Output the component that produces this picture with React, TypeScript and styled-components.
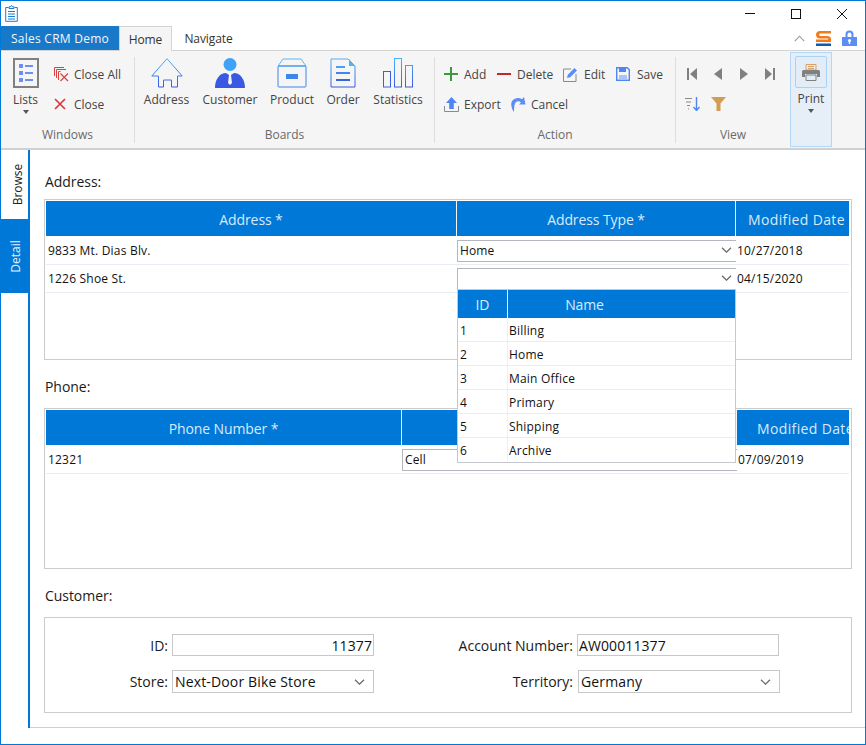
import * as React from 'react'
import styled, { createGlobalStyle } from 'styled-components'

const GlobalStyle = createGlobalStyle`
  html, body {
    margin: 0;
    padding: 0;
    background: #fff;
  }
  body {
    font-family: "Open Sans", "Noto Sans", sans-serif;
    font-size: 12px;
    color: #111;
  }
  * {
    box-sizing: border-box;
  }
`

// Window

const Window = styled.div`
  width: 866px;
  height: 745px;
  border: 1px solid #0078d7;
  background: #fff;
  overflow: hidden;
`

const TitleBar = styled.div`
  display: flex;
  align-items: flex-start;
  height: 25px;
  padding-left: 4px;
`

const AppIcon = styled.svg`
  margin-top: 4px;
`

const WindowButtons = styled.div`
  display: flex;
  margin-left: auto;
`

const WindowButton = styled.div`
  display: flex;
  justify-content: center;
  align-items: center;
  width: 46px;
  height: 26px;
`

// Tabs

const TabRow = styled.div`
  display: flex;
  align-items: stretch;
  height: 25px;
  border-bottom: 1px solid #d4d4d4;
`

const AppTab = styled.div`
  display: flex;
  align-items: center;
  justify-content: center;
  width: 118px;
  height: 24px;
  background: #1879c9;
  color: #f2f7fc;
  letter-spacing: 0.25px;
`

const Tab = styled.div<{ $active?: boolean }>`
  display: flex;
  align-items: center;
  justify-content: center;
  width: ${({ $active }) => ($active ? '53px' : '73px')};
  height: ${({ $active }) => ($active ? '25px' : '24px')};
  color: #333;
  letter-spacing: -0.1px;
  background: ${({ $active }) => ($active ? '#f5f5f5' : 'transparent')};
  border: ${({ $active }) => ($active ? '1px solid #d4d4d4' : 'none')};
  border-bottom: none;
`

const TabTools = styled.div`
  display: flex;
  align-items: center;
  gap: 11px;
  margin-left: auto;
  padding-right: 8px;
`

// Ribbon

const Ribbon = styled.div`
  display: flex;
  height: 99px;
  padding: 6px 0 5px;
  background: #f5f5f5;
  border-bottom: 2px solid #d0d0d0;
`

const Group = styled.div<{ $width: number; $last?: boolean }>`
  display: flex;
  flex-direction: column;
  width: ${({ $width }) => $width}px;
  border-right: ${({ $last }) => ($last ? 'none' : '1px solid #dedede')};
`

const GroupBody = styled.div<{ $pad: number; $gap?: number }>`
  display: flex;
  flex: 1;
  gap: ${({ $gap }) => $gap ?? 0}px;
  padding: 1px 0 0 ${({ $pad }) => $pad}px;
`

const GroupLabel = styled.div`
  height: 18px;
  line-height: 20px;
  text-align: center;
  color: #6a6a6a;
`

const LargeButton = styled.div<{ $width: number }>`
  display: flex;
  flex-direction: column;
  align-items: center;
  width: ${({ $width }) => $width}px;
  color: #444;
  white-space: nowrap;
`

const LargeIcon = styled.div`
  display: flex;
  justify-content: center;
  align-items: center;
  height: 30px;
  margin-bottom: 3px;
`

const LargeLabel = styled.div`
  height: 17px;
  line-height: 18px;
`

const Caret = styled.div`
  width: 0;
  height: 0;
  margin-top: 2px;
  border-left: 3px solid transparent;
  border-right: 3px solid transparent;
  border-top: 4px solid #555;
`

const SmallStack = styled.div<{ $left?: number }>`
  display: flex;
  flex-direction: column;
  margin-top: 1px;
  margin-left: ${({ $left }) => $left ?? 0}px;
`

const SmallRow = styled.div`
  display: flex;
  align-items: center;
  height: 30px;
`

const SmallButton = styled.div<{ $width?: number; $gap?: number }>`
  display: flex;
  align-items: center;
  gap: ${({ $gap }) => $gap ?? 6}px;
  width: ${({ $width }) => ($width ? `${$width}px` : 'auto')};
  color: #444;
  white-space: nowrap;
`

const NavRow = styled.div<{ $left: number }>`
  display: flex;
  align-items: center;
  height: 30px;
  padding-left: ${({ $left }) => $left}px;
`

const NavSlot = styled.div<{ $width: number }>`
  display: flex;
  align-items: center;
  justify-content: center;
  width: ${({ $width }) => $width}px;
`

const PrintButton = styled.div`
  display: flex;
  flex-direction: column;
  align-items: center;
  width: 42px;
  margin: -5px 0 -4px;
  padding-top: 3px;
  background: #e6eef7;
  border: 1px solid #b3d7f5;
  color: #444;
`

const PrintIconBox = styled.div`
  display: flex;
  align-items: center;
  justify-content: center;
  width: 32px;
  height: 32px;
  margin-bottom: 2px;
  background: #e3edf7;
  border: 1px solid #a9d3f5;
  border-radius: 2px;
`

// Main area

const Body = styled.div`
  display: flex;
  height: 578px;
`

const SideTabs = styled.div`
  display: flex;
  flex-direction: column;
  width: 29px;
  border-right: 2px solid #0078d7;
  flex-shrink: 0;
`

const SideTab = styled.div<{ $active?: boolean; $height: number }>`
  display: flex;
  align-items: center;
  justify-content: center;
  height: ${({ $height }) => $height}px;
  padding-left: ${({ $active }) => ($active ? 2 : 6)}px;
  background: ${({ $active }) => ($active ? '#0078d7' : '#fff')};
  color: ${({ $active }) => ($active ? '#e6f1fb' : '#222')};
  span {
    transform: rotate(-90deg);
  }
`

const Panel = styled.div`
  flex: 1;
  display: flex;
  flex-direction: column;
  gap: 17px;
  padding: 22px 12px 14px 14px;
  border-bottom: 1px solid #cfcfcf;
`

const Section = styled.section``

const SectionTitle = styled.div<{ $tight?: boolean }>`
  height: 18px;
  line-height: 20px;
  margin-bottom: ${({ $tight }) => ($tight ? 9 : 13)}px;
  padding-left: 1px;
  font-size: 14px;
  letter-spacing: -0.05px;
  color: #1a1a1a;
`

const GridBox = styled.div`
  position: relative;
  width: 808px;
  height: 161px;
  padding: 1px 2px 1px 1px;
  border: 1px solid #cccccc;
`

const HeaderRow = styled.div<{ $cols: string }>`
  display: grid;
  grid-template-columns: ${({ $cols }) => $cols};
  height: 35px;
  margin-bottom: 1px;
  background: #0078d7;
  overflow: hidden;
`

const HeaderCell = styled.div`
  display: flex;
  align-items: center;
  justify-content: center;
  padding-top: 2px;
  font-size: 14px;
  letter-spacing: -0.1px;
  white-space: nowrap;
  color: #dbeafa;
  border-right: 1px solid #f2f7fc;
  &:last-child {
    border-right: none;
    letter-spacing: 0.35px;
  }
`

const DataRow = styled.div<{ $cols: string }>`
  display: grid;
  grid-template-columns: ${({ $cols }) => $cols};
  height: 28px;
  border-bottom: 1px solid #e8edf4;
  overflow: hidden;
`

const DataCell = styled.div<{ $pad?: number }>`
  display: flex;
  align-items: center;
  padding-left: ${({ $pad }) => $pad ?? 2}px;
  letter-spacing: 0.2px;
  white-space: nowrap;
`

const CellSelect = styled.div`
  display: flex;
  align-items: center;
  justify-content: space-between;
  height: 22px;
  margin-top: 3px;
  padding: 0 4px 2px 2px;
  background: #fff;
  border: 1px solid #b4b6bd;
  border-right: none;
  letter-spacing: 0.1px;
`

// Lookup dropdown opened over the phone grid

const Lookup = styled.div`
  position: absolute;
  left: 412px;
  top: 89px;
  z-index: 2;
  width: 279px;
  height: 174px;
  background: #fff;
  border: 1px solid #c6c8ce;
`

const LookupHeader = styled.div`
  display: grid;
  grid-template-columns: 50px 153px;
  height: 28px;
  background: #0078d7;
  font-size: 14px;
  letter-spacing: -0.1px;
  color: #dbeafa;
`

const LookupHeading = styled.div`
  display: flex;
  align-items: center;
  justify-content: center;
  &:first-child {
    border-right: 1px solid #f2f7fc;
  }
`

const LookupRow = styled.div`
  display: grid;
  grid-template-columns: 50px 1fr;
  height: 24px;
  border-bottom: 1px solid #e9edf4;
  &:last-child {
    border-bottom-color: transparent;
  }
`

const LookupCell = styled.div`
  display: flex;
  align-items: center;
  padding: 1px 0 0 1px;
  letter-spacing: 0.2px;
  &:first-child {
    padding-left: 2px;
    border-right: 1px solid #eceff5;
  }
`

// Customer form

const FormBox = styled.div`
  display: grid;
  grid-template-columns: 123px 202px 195px 202px;
  column-gap: 4px;
  row-gap: 14px;
  align-content: start;
  width: 808px;
  height: 96px;
  padding: 16px 0 0 0;
  border: 1px solid #cccccc;
  font-size: 14px;
`

const FormLabel = styled.label`
  display: flex;
  align-items: center;
  justify-content: flex-end;
  height: 22px;
  color: #1a1a1a;
`

const FormInput = styled.div<{ $right?: boolean }>`
  display: flex;
  align-items: center;
  justify-content: ${({ $right }) => ($right ? 'flex-end' : 'flex-start')};
  height: 22px;
  padding: 0 1px;
  border: 1px solid #c8c8c8;
  letter-spacing: 0.1px;
  color: #111;
`

const FormSelect = styled.div<{ $shift?: number }>`
  display: flex;
  align-items: center;
  justify-content: space-between;
  height: 23px;
  margin-left: ${({ $shift }) => $shift ?? 0}px;
  margin-right: ${({ $shift }) => -($shift ?? 0)}px;
  padding: 0 8px 0 2px;
  border: 1px solid #c8c8c8;
  letter-spacing: 0.15px;
  color: #111;
`

// Icons

const Grad: React.FC<{ id: string }> = ({ id }) => (
  <defs>
    <linearGradient id={id} gradientUnits="userSpaceOnUse" x1="0" y1="0" x2="0" y2="30">
      <stop offset="0" stopColor="#4ab4f8" />
      <stop offset="1" stopColor="#3a56e0" />
    </linearGradient>
  </defs>
)

const Chevron: React.FC = () => (
  <svg width="11" height="6" viewBox="0 0 11 6" fill="none" stroke="#666" strokeWidth="1.2">
    <path d="M1 .8l4.500 4.400L10 .8" />
  </svg>
)

const ListsIcon = () => (
  <svg width="26" height="30" viewBox="0 0 26 30">
    <rect x="1" y="1" width="24" height="28" fill="none" stroke="#808080" strokeWidth="2" />
    <g fill="#6c8ef7">
      <rect x="6" y="6" width="4" height="4" />
      <rect x="6" y="13" width="4" height="4" />
      <rect x="6" y="20" width="4" height="4" />
      <rect x="12" y="7" width="8" height="2" />
      <rect x="12" y="14" width="8" height="2" />
      <rect x="12" y="21" width="8" height="2" />
    </g>
  </svg>
)

const AddressIcon = () => (
  <svg width="32" height="30" viewBox="0 0 32 30" fill="none">
    <Grad id="g-addr" />
    <path d="M16 .7L.8 18h6.700v11h5V22h8v7h6V18h4.700L16 .7z" stroke="url(#g-addr)" strokeWidth="1" />
  </svg>
)

const CustomerIcon = () => (
  <svg width="32" height="30" viewBox="0 0 32 30">
    <circle cx="16" cy="6.500" r="6.500" fill="#3fa2f6" />
    <path d="M1 30c0-9 5-15 11-15l3 2-1 8 2 2 2-2-1-8 3-2c6 0 11 6 11 15H1z" fill="#3a58e2" />
  </svg>
)

const ProductIcon = () => (
  <svg width="30" height="30" viewBox="0 0 30 30" fill="none">
    <path d="M1 8l5-7h18l5 7H1z" stroke="#5cb8f8" strokeWidth="1" />
    <rect x="1" y="8" width="28" height="21" stroke="#3f86ec" strokeWidth="1" rx="1" />
    <rect x="9" y="16" width="12" height="5" fill="#3f86ec" />
  </svg>
)

const OrderIcon = () => (
  <svg width="26" height="30" viewBox="0 0 26 30" fill="none">
    <Grad id="g-order" />
    <path d="M1 1h17l7 7v21H1V1z" stroke="url(#g-order)" strokeWidth="1" />
    <path d="M19 1l6 7h-6V1z" fill="#4ab4f8" />
    <rect x="6" y="8" width="9" height="2" fill="#4a9ef5" />
    <rect x="6" y="14" width="14" height="2" fill="#4484ee" />
    <rect x="6" y="21" width="14" height="2" fill="#3c63e4" />
  </svg>
)

const StatisticsIcon = () => (
  <svg width="32" height="30" viewBox="0 0 32 30" fill="none">
    <Grad id="g-stat" />
    <rect x="1.500" y="13.500" width="7" height="15.500" stroke="#3a60e2" />
    <rect x="12.500" y=".5" width="7" height="28.500" stroke="url(#g-stat)" />
    <rect x="23.500" y="7.500" width="7" height="21.500" stroke="url(#g-stat)" />
  </svg>
)

const CloseAllIcon = () => (
  <svg width="15" height="15" viewBox="0 0 15 15" fill="none" stroke="#d8433f" strokeWidth="1">
    <path d="M.5 9V.5H10M2.500 11V2.500H12M4.500 13V4.500h2" />
    <path d="M6.500 6.500l7.500 7.500M14 6.500l-7.500 7.500" strokeWidth="1.200" />
  </svg>
)

const CloseIcon = () => (
  <svg width="12" height="12" viewBox="0 0 12 12" fill="none" stroke="#d8333a" strokeWidth="1.600">
    <path d="M1 1l10 10M11 1L1 11" />
  </svg>
)

const PlusIcon = () => (
  <svg width="14" height="14" viewBox="0 0 14 14" fill="#3a9a3d">
    <rect x="6" y="0" width="2" height="14" />
    <rect x="0" y="6" width="14" height="2" />
  </svg>
)

const MinusIcon = () => (
  <svg width="14" height="14" viewBox="0 0 14 14" fill="#c9232b">
    <rect x="0" y="6" width="14" height="2" />
  </svg>
)

const EditIcon = () => (
  <svg width="15" height="15" viewBox="0 0 15 15" fill="none">
    <path d="M8 2H.5v12.500H13V7" stroke="#8a8a8a" />
    <path d="M4 11l.8-3.200L11.500 1l2.500 2.500-6.800 6.700L4 11z" fill="#5b8df5" />
  </svg>
)

const SaveIcon = () => (
  <svg width="14" height="14" viewBox="0 0 14 14" fill="none">
    <path d="M.7.700h10.600l2 2v10.600H.7V.700z" stroke="#4f86f2" strokeWidth="1.400" />
    <rect x="3" y="1" width="7" height="4" fill="#4f86f2" />
    <rect x="3" y="8" width="8" height="5" fill="#a9c4f8" />
  </svg>
)

const ExportIcon = () => (
  <svg width="15" height="15" viewBox="0 0 15 15" fill="none">
    <path d="M.5 9v5.500h14V9" stroke="#8a8a8a" />
    <path d="M7.500 0L13 6H9.800v6H5.200V6H2L7.500 0z" fill="#4f86f2" />
  </svg>
)

const CancelIcon = () => (
  <svg width="15" height="15" viewBox="0 0 15 15">
    <path
      d="M3 15C0 11-.6 6 1.500 3.500 3.800.8 8 .2 11 2.200L13 0l1.500 7.500H8l2-2C8.200 3.900 6.200 4 4.800 5.300 3.400 7 3 10.500 3 15z"
      fill="#5b8df5"
    />
  </svg>
)

const FirstIcon = () => (
  <svg width="10" height="12" viewBox="0 0 10 12" fill="#808080">
    <rect x="0" y="0" width="2" height="12" />
    <path d="M10 0v12L3 6z" />
  </svg>
)

const PrevIcon = () => (
  <svg width="8" height="12" viewBox="0 0 8 12" fill="#808080">
    <path d="M8 0v12L0 6z" />
  </svg>
)

const NextIcon = () => (
  <svg width="8" height="12" viewBox="0 0 8 12" fill="#808080">
    <path d="M0 0v12l8-6z" />
  </svg>
)

const LastIcon = () => (
  <svg width="10" height="12" viewBox="0 0 10 12" fill="#808080">
    <path d="M0 0v12l7-6z" />
    <rect x="8" y="0" width="2" height="12" />
  </svg>
)

const SortIcon = () => (
  <svg width="15" height="14" viewBox="0 0 15 14" fill="none">
    <path d="M0 1.500h7M1 5h5M2 8.500h3M3 12h1" stroke="#8a8a8a" />
    <path d="M11.500 0v13M8.500 10l3 3.500 3-3.500" stroke="#4f86f2" strokeWidth="1.400" />
  </svg>
)

const FilterIcon = () => (
  <svg width="15" height="14" viewBox="0 0 15 14" fill="#d19c54">
    <path d="M0 0h15L9.500 6.500V14h-4V6.500L0 0z" />
  </svg>
)

const PrinterIcon = () => (
  <svg width="18" height="17" viewBox="0 0 18 17" fill="none">
    <path d="M4 .5h10V6H4z" stroke="#d9a066" />
    <path d="M6 2.500h6M6 4.500h6" stroke="#d9a066" />
    <path d="M0 7.500C0 6.500 1 6 2 6h14c1 0 2 .500 2 1.500V13h-3v-3H3v3H0V7.500z" fill="#808080" />
    <path d="M4 11h10v5.500H4z" stroke="#808080" />
  </svg>
)

const LogoIcon = () => (
  <svg width="15" height="15" viewBox="0 0 15 15">
    <path d="M15 0v2.500H4.500C3.700 2.500 3.300 3 3.300 3.700S3.700 5 4.500 5H11c2.300 0 4 1 4 3v3H0V8.500h11.500c.5 0 .8-.2.8-.6s-.3-.4-.8-.4H4C1.500 7.500 0 6 0 3.700S1.500 0 4 0h11z" fill="#f27a1a" />
    <rect x="0" y="12.500" width="15" height="2.500" fill="#0f5cad" />
  </svg>
)

const LockIcon = () => (
  <svg width="15" height="16" viewBox="0 0 15 16">
    <path d="M3.500 7V4.500a4 4 0 018 0V7h-2V4.500a2 2 0 00-4 0V7z" fill="#5b8df5" />
    <path d="M0 7h15v9H0z" fill="#5b8df5" />
    <circle cx="7.500" cy="10.500" r="1.500" fill="#fff" />
    <rect x="6.800" y="11" width="1.400" height="3" fill="#fff" />
  </svg>
)

const addressCols = '411px 279px 133px'
const phoneCols = '356px 335px 149px'

const lookupRows = [
  ['1', 'Billing'],
  ['2', 'Home'],
  ['3', 'Main Office'],
  ['4', 'Primary'],
  ['5', 'Shipping'],
  ['6', 'Archive'],
]

const App: React.FC = () => {
  return (
    <Window>
      <GlobalStyle />

      <TitleBar>
        <AppIcon width="13" height="17" viewBox="0 0 13 17" fill="none" stroke="#1b7fd4">
          <path d="M3.500 2.500H.7v13.800h11.600V2.500H9.500" />
          <path d="M4 3.500V1.800h1.500c0-1.500 2-1.500 2 0H9v1.700H4z" />
          <path d="M3 6.500h7M3 9h7M3 11.500h7M3 14h7" />
        </AppIcon>
        <WindowButtons>
          <WindowButton>
            <svg width="10" height="2" viewBox="0 0 10 2">
              <rect width="10" height="1" fill="#111" />
            </svg>
          </WindowButton>
          <WindowButton>
            <svg width="10" height="10" viewBox="0 0 10 10" fill="none" stroke="#111">
              <rect x=".5" y=".5" width="9" height="9" />
            </svg>
          </WindowButton>
          <WindowButton>
            <svg width="10" height="10" viewBox="0 0 10 10" fill="none" stroke="#111">
              <path d="M0 0l10 10M10 0L0 10" />
            </svg>
          </WindowButton>
        </WindowButtons>
      </TitleBar>

      <TabRow>
        <AppTab>Sales CRM Demo</AppTab>
        <Tab $active>Home</Tab>
        <Tab>Navigate</Tab>
        <TabTools>
          <svg width="11" height="7" viewBox="0 0 11 7" fill="none" stroke="#999" strokeWidth="1.100">
            <path d="M.8 6.200L5.500 1.200l4.700 5" />
          </svg>
          <LogoIcon />
          <LockIcon />
        </TabTools>
      </TabRow>

      <Ribbon>
        <Group $width={134}>
          <GroupBody $pad={11}>
            <LargeButton $width={27}>
              <LargeIcon>
                <ListsIcon />
              </LargeIcon>
              <LargeLabel>Lists</LargeLabel>
              <Caret />
            </LargeButton>
            <SmallStack $left={15}>
              <SmallRow>
                <SmallButton $gap={5}>
                  <CloseAllIcon />
                  Close All
                </SmallButton>
              </SmallRow>
              <SmallRow>
                <SmallButton $gap={8}>
                  <CloseIcon />
                  Close
                </SmallButton>
              </SmallRow>
            </SmallStack>
          </GroupBody>
          <GroupLabel>Windows</GroupLabel>
        </Group>

        <Group $width={300}>
          <GroupBody $pad={8} $gap={12}>
            <LargeButton $width={47}>
              <LargeIcon>
                <AddressIcon />
              </LargeIcon>
              <LargeLabel>Address</LargeLabel>
            </LargeButton>
            <LargeButton $width={56}>
              <LargeIcon>
                <CustomerIcon />
              </LargeIcon>
              <LargeLabel>Customer</LargeLabel>
            </LargeButton>
            <LargeButton $width={44}>
              <LargeIcon>
                <ProductIcon />
              </LargeIcon>
              <LargeLabel>Product</LargeLabel>
            </LargeButton>
            <LargeButton $width={34}>
              <LargeIcon>
                <OrderIcon />
              </LargeIcon>
              <LargeLabel>Order</LargeLabel>
            </LargeButton>
            <LargeButton $width={52}>
              <LargeIcon>
                <StatisticsIcon />
              </LargeIcon>
              <LargeLabel>Statistics</LargeLabel>
            </LargeButton>
          </GroupBody>
          <GroupLabel>Boards</GroupLabel>
        </Group>

        <Group $width={241}>
          <GroupBody $pad={9}>
            <SmallStack>
              <SmallRow>
                <SmallButton $width={53}>
                  <PlusIcon />
                  Add
                </SmallButton>
                <SmallButton $width={66}>
                  <MinusIcon />
                  Delete
                </SmallButton>
                <SmallButton $width={53}>
                  <EditIcon />
                  Edit
                </SmallButton>
                <SmallButton $gap={7}>
                  <SaveIcon />
                  Save
                </SmallButton>
              </SmallRow>
              <SmallRow>
                <SmallButton $width={67} $gap={5}>
                  <ExportIcon />
                  Export
                </SmallButton>
                <SmallButton $gap={5}>
                  <CancelIcon />
                  Cancel
                </SmallButton>
              </SmallRow>
            </SmallStack>
          </GroupBody>
          <GroupLabel>Action</GroupLabel>
        </Group>

        <Group $width={114} $last>
          <GroupBody $pad={0}>
            <SmallStack>
              <NavRow $left={2}>
                <NavSlot $width={27}>
                  <FirstIcon />
                </NavSlot>
                <NavSlot $width={26}>
                  <PrevIcon />
                </NavSlot>
                <NavSlot $width={26}>
                  <NextIcon />
                </NavSlot>
                <NavSlot $width={25}>
                  <LastIcon />
                </NavSlot>
              </NavRow>
              <NavRow $left={3}>
                <NavSlot $width={26}>
                  <SortIcon />
                </NavSlot>
                <NavSlot $width={26}>
                  <FilterIcon />
                </NavSlot>
              </NavRow>
            </SmallStack>
          </GroupBody>
          <GroupLabel>View</GroupLabel>
        </Group>

        <PrintButton>
          <PrintIconBox>
            <PrinterIcon />
          </PrintIconBox>
          <LargeLabel>Print</LargeLabel>
          <Caret />
        </PrintButton>
      </Ribbon>

      <Body>
        <SideTabs>
          <SideTab $height={69}>
            <span>Browse</span>
          </SideTab>
          <SideTab $active $height={74}>
            <span>Detail</span>
          </SideTab>
        </SideTabs>

        <Panel>
          <Section>
            <SectionTitle $tight>Address:</SectionTitle>
            <GridBox>
              <HeaderRow $cols={addressCols}>
                <HeaderCell>Address *</HeaderCell>
                <HeaderCell>Address Type *</HeaderCell>
                <HeaderCell>Modified Date *</HeaderCell>
              </HeaderRow>
              <DataRow $cols={addressCols}>
                <DataCell>9833 Mt. Dias Blv.</DataCell>
                <CellSelect>
                  Home
                  <Chevron />
                </CellSelect>
                <DataCell $pad={1}>10/27/2018</DataCell>
              </DataRow>
              <DataRow $cols={addressCols}>
                <DataCell>1226 Shoe St.</DataCell>
                <CellSelect>
                  <span />
                  <Chevron />
                </CellSelect>
                <DataCell $pad={1}>04/15/2020</DataCell>
              </DataRow>
              <Lookup>
                <LookupHeader>
                  <LookupHeading>ID</LookupHeading>
                  <LookupHeading>Name</LookupHeading>
                </LookupHeader>
                {lookupRows.map(([id, name]) => (
                  <LookupRow key={id}>
                    <LookupCell>{id}</LookupCell>
                    <LookupCell>{name}</LookupCell>
                  </LookupRow>
                ))}
              </Lookup>
            </GridBox>
          </Section>

          <Section>
            <SectionTitle>Phone:</SectionTitle>
            <GridBox>
              <HeaderRow $cols={phoneCols}>
                <HeaderCell>Phone Number *</HeaderCell>
                <HeaderCell />
                <HeaderCell>Modified Date *</HeaderCell>
              </HeaderRow>
              <DataRow $cols={phoneCols}>
                <DataCell>12321</DataCell>
                <CellSelect>
                  Cell
                  <Chevron />
                </CellSelect>
                <DataCell $pad={1}>07/09/2019</DataCell>
              </DataRow>
            </GridBox>
          </Section>

          <Section>
            <SectionTitle>Customer:</SectionTitle>
            <FormBox>
              <FormLabel>ID:</FormLabel>
              <FormInput $right>11377</FormInput>
              <FormLabel>Account Number:</FormLabel>
              <FormInput>AW00011377</FormInput>
              <FormLabel>Store:</FormLabel>
              <FormSelect>
                Next-Door Bike Store
                <Chevron />
              </FormSelect>
              <FormLabel>Territory:</FormLabel>
              <FormSelect $shift={1}>
                Germany
                <Chevron />
              </FormSelect>
            </FormBox>
          </Section>
        </Panel>
      </Body>
    </Window>
  )
}

export default App
